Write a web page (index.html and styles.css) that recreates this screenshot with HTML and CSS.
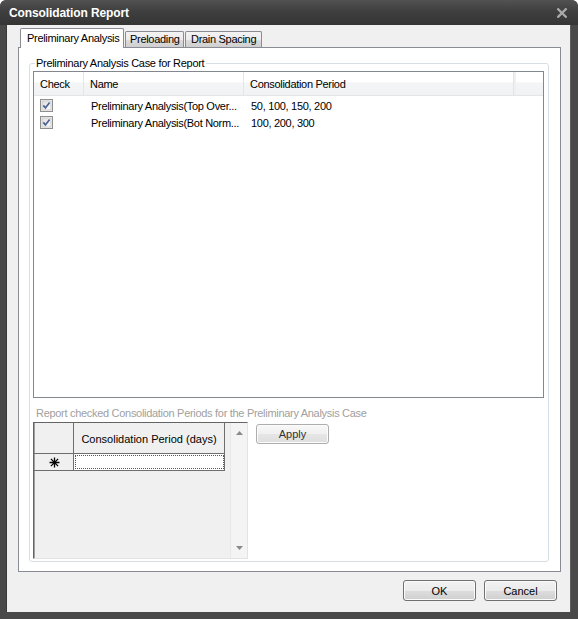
FILE: index.html
```html
<!DOCTYPE html>
<html>
<head>
<meta charset="utf-8">
<link rel="stylesheet" href="styles.css">
</head>
<body>
<div class="window">
  <div class="titlebar">
    <span class="title">Consolidation Report</span>
    <svg class="close" width="10" height="10" viewBox="0 0 10 10"><path d="M1.2 1.2 L8.8 8.8 M8.8 1.2 L1.2 8.8" stroke="#a9a9a9" stroke-width="2.3" stroke-linecap="square"/></svg>
  </div>
  <div class="client">
    <div class="tabs">
      <div class="tab selected">Preliminary Analysis</div>
      <div class="tab t-preload">Preloading</div>
      <div class="tab t-drain">Drain Spacing</div>
    </div>
    <div class="tabpage">
      <div class="group">
        <div class="group-title">Preliminary Analysis Case for Report</div>
        <div class="listview">
          <div class="lv-header">
            <div class="lv-col c1">Check</div>
            <div class="lv-col c2">Name</div>
            <div class="lv-col c3">Consolidation Period</div>
            <div class="lv-col c4"></div>
          </div>
          <div class="lv-rows">
            <div class="lv-row">
              <div class="lv-cell c1"><svg class="cb" width="13" height="13" viewBox="0 0 13 13"><defs><linearGradient id="g1" x1="0" y1="0" x2="1" y2="1"><stop offset="0" stop-color="#dedede"/><stop offset="1" stop-color="#fbfbfb"/></linearGradient></defs><rect x="0.5" y="0.5" width="12" height="12" fill="#f4f4f4" stroke="#8f8f8f"/><rect x="2" y="2" width="9" height="9" fill="url(#g1)" stroke="#c6c6c6" stroke-width="0.8"/><path d="M3.3 6.4 L5.4 8.9 L9.6 3.4" fill="none" stroke="#4d6395" stroke-width="1.7"/></svg></div>
              <div class="lv-cell c2">Preliminary Analysis(Top Over...</div>
              <div class="lv-cell c3">50, 100, 150, 200</div>
            </div>
            <div class="lv-row">
              <div class="lv-cell c1"><svg class="cb" width="13" height="13" viewBox="0 0 13 13"><rect x="0.5" y="0.5" width="12" height="12" fill="#f4f4f4" stroke="#8f8f8f"/><rect x="2" y="2" width="9" height="9" fill="url(#g1)" stroke="#c6c6c6" stroke-width="0.8"/><path d="M3.3 6.4 L5.4 8.9 L9.6 3.4" fill="none" stroke="#4d6395" stroke-width="1.7"/></svg></div>
              <div class="lv-cell c2">Preliminary Analysis(Bot Norm...</div>
              <div class="lv-cell c3">100, 200, 300</div>
            </div>
          </div>
        </div>
        <div class="disabled-label">Report checked Consolidation Periods for the Preliminary Analysis Case</div>
        <div class="lower">
          <div class="grid">
            <div class="grid-cells">
              <div class="g-row g-head">
                <div class="g-rh"></div>
                <div class="g-ch">Consolidation Period (days)</div>
              </div>
              <div class="g-row g-new">
                <div class="g-rh"><svg width="11" height="11" viewBox="0 0 11 11"><path d="M5.5 0.5 V10.5 M0.5 5.5 H10.5 M1.9 1.9 L9.1 9.1 M9.1 1.9 L1.9 9.1" stroke="#000" stroke-width="1.3"/></svg></div>
                <div class="g-cell"><div class="focus"></div></div>
              </div>
            </div>
            <div class="vscroll">
              <svg width="7" height="4" viewBox="0 0 7 4"><path d="M0 4 L3.5 0 L7 4 Z" fill="#8a8a8a"/></svg>
              <svg width="7" height="4" viewBox="0 0 7 4"><path d="M0 0 L3.5 4 L7 0 Z" fill="#8a8a8a"/></svg>
            </div>
          </div>
          <div class="btn apply">Apply</div>
        </div>
      </div>
    </div>
    <div class="buttons">
      <div class="btn main">OK</div>
      <div class="btn main">Cancel</div>
    </div>
  </div>
</div>
</body>
</html>
```
FILE: styles.css
```css
html, body {
  margin: 0;
  padding: 0;
  background: #ffffff;
}
body {
  font-family: "Liberation Sans", Arial, sans-serif;
  font-size: 11px;
  letter-spacing: -0.3px;
  color: #000;
}
.window {
  width: 578px;
  height: 619px;
  box-sizing: border-box;
  background: #494949;
  border-radius: 6px 6px 0 0;
  padding: 0 7px 7px 6px;
  display: flex;
  flex-direction: column;
  overflow: hidden;
}
.titlebar {
  height: 25px;
  margin: 0 -7px 0 -6px;
  padding: 0 11px 0 9px;
  display: flex;
  align-items: center;
  justify-content: space-between;
  background: linear-gradient(#525252 0%, #3f3f3f 45%, #353535 100%);
  border-radius: 6px 6px 0 0;
}
.title {
  color: #ffffff;
  font-weight: bold;
  font-size: 12px;
  letter-spacing: -0.1px;
  margin-top: 1px;
}
.close {
  margin-top: 1px;
}
.client {
  flex: 1;
  background: #f0f0f0;
  padding: 3px 10px 11px 12px;
  display: flex;
  flex-direction: column;
  box-shadow: inset 1px 0 #3a3a3a, inset -1px 0 #5e5e5e;
}
.tabs {
  height: 19px;
  display: flex;
  align-items: flex-end;
  padding-left: 2px;
}
.tab {
  box-sizing: border-box;
  border: 1px solid #898c95;
  border-bottom: none;
  border-radius: 2px 2px 0 0;
  background: linear-gradient(#f3f3f3 0%, #ebebeb 50%, #dddddd 51%, #cfcfcf 100%);
  height: 16px;
  line-height: 15px;
  padding: 0 0 0 4px;
  white-space: nowrap;
}
.tab.selected {
  height: 20px;
  margin-bottom: -1px;
  background: #ffffff;
  line-height: 18px;
  padding: 0 0 0 6px;
  width: 104px;
  position: relative;
  z-index: 1;
}
.t-preload {
  margin-left: 1px;
  width: 59px;
}
.t-drain {
  margin-left: 1px;
  width: 77px;
  padding-left: 5px;
}
.tabpage {
  height: 525px;
  box-sizing: border-box;
  border: 1px solid #898c95;
  background: #ffffff;
  padding: 15px 11px 9px 10px;
  display: flex;
  flex-direction: column;
}
.group {
  flex: 1;
  border: 1px solid #d5dfe5;
  border-radius: 3px;
  padding: 0 4px 1px 3px;
  display: flex;
  flex-direction: column;
}
.group-title {
  margin: -7px 0 0 2px;
  height: 13px;
  line-height: 13px;
  padding: 0 2px 0 1px;
  background: #ffffff;
  width: fit-content;
}
.listview {
  margin-top: 1px;
  height: 327px;
  box-sizing: border-box;
  border: 1px solid #828790;
  background: #ffffff;
}
.lv-header {
  display: flex;
  height: 24px;
  box-sizing: border-box;
  border-bottom: 1px solid #e5e5e5;
  background: linear-gradient(#ffffff 0%, #ffffff 45%, #f4f5f6 46%, #f1f2f4 100%);
}
.lv-col {
  box-sizing: border-box;
  border-right: 1px solid #e5e5e5;
  line-height: 25px;
  padding-left: 6px;
}
.c1 { width: 50px; }
.c2 { width: 160px; }
.c3 { width: 270px; }
.c4 { flex: 1; border-right: none; box-shadow: inset 2px 0 #f0f0f0; }
.lv-rows {
  padding-top: 1px;
}
.lv-row {
  display: flex;
  height: 17px;
  align-items: center;
}
.lv-cell {
  box-sizing: border-box;
  padding-left: 6px;
  white-space: nowrap;
  overflow: hidden;
}
.lv-cell.c2 { padding-left: 7px; }
.lv-cell.c3 { padding-left: 7px; }
.cb {
  display: block;
}
.disabled-label {
  margin-top: 9px;
  height: 13px;
  line-height: 13px;
  padding-left: 3px;
  color: #a0a0a0;
}
.lower {
  margin-top: 2px;
  display: flex;
  align-items: flex-start;
}
.grid {
  width: 215px;
  height: 137px;
  box-sizing: border-box;
  border: 1px solid;
  border-color: #646464 #e3e3e3 #e3e3e3 #646464;
  box-shadow: inset 1px 0 #a0a0a0;
  background: #f0f0f0;
  display: flex;
}
.grid-cells {
  flex: 1;
}
.g-row {
  display: flex;
  box-sizing: border-box;
  border-bottom: 1px solid #6e6e6e;
  width: 191px;
}
.g-head {
  height: 31px;
}
.g-new {
  height: 17px;
}
.g-rh {
  width: 40px;
  box-sizing: border-box;
  border-right: 1px solid #6e6e6e;
  display: flex;
  align-items: center;
  justify-content: center;
  padding-left: 1px;
}
.g-ch {
  flex: 1;
  box-sizing: border-box;
  border-right: 1px solid #6e6e6e;
  display: flex;
  align-items: center;
  justify-content: center;
  letter-spacing: 0;
  padding-top: 1px;
}
.g-cell {
  flex: 1;
  box-sizing: border-box;
  border-right: 1px solid #6e6e6e;
  background: #ffffff;
  padding: 1px 0 0 1px;
}
.focus {
  height: 14px;
  box-sizing: border-box;
  border: 1px dotted #555;
}
.vscroll {
  width: 17px;
  box-sizing: border-box;
  background: #f4f4f4;
  border-left: 1px solid #e8e8e8;
  display: flex;
  flex-direction: column;
  justify-content: space-between;
  align-items: center;
  padding: 8px 0 8px 0;
}
.vscroll svg {
  display: block;
}
.btn {
  box-sizing: border-box;
  width: 73px;
  display: flex;
  align-items: center;
  justify-content: center;
  border-radius: 3px;
  letter-spacing: 0;
}
.apply {
  margin: 2px 0 0 8px;
  height: 20px;
  border: 1px solid #adadad;
  background: linear-gradient(#f8f8f8 0%, #f0f0f0 50%, #e6e6e6 51%, #dedede 100%);
  color: #333;
  box-shadow: inset 0 0 0 1px #fcfcfc;
}
.buttons {
  margin-top: 8px;
  height: 21px;
  display: flex;
  justify-content: flex-end;
  gap: 8px;
  padding-right: 4px;
}
.main {
  height: 21px;
  border: 1px solid #707070;
  background: linear-gradient(#f2f2f2 0%, #ebebeb 50%, #dddddd 51%, #cfcfcf 100%);
  box-shadow: inset 0 0 0 1px #fafafa;
}
```
